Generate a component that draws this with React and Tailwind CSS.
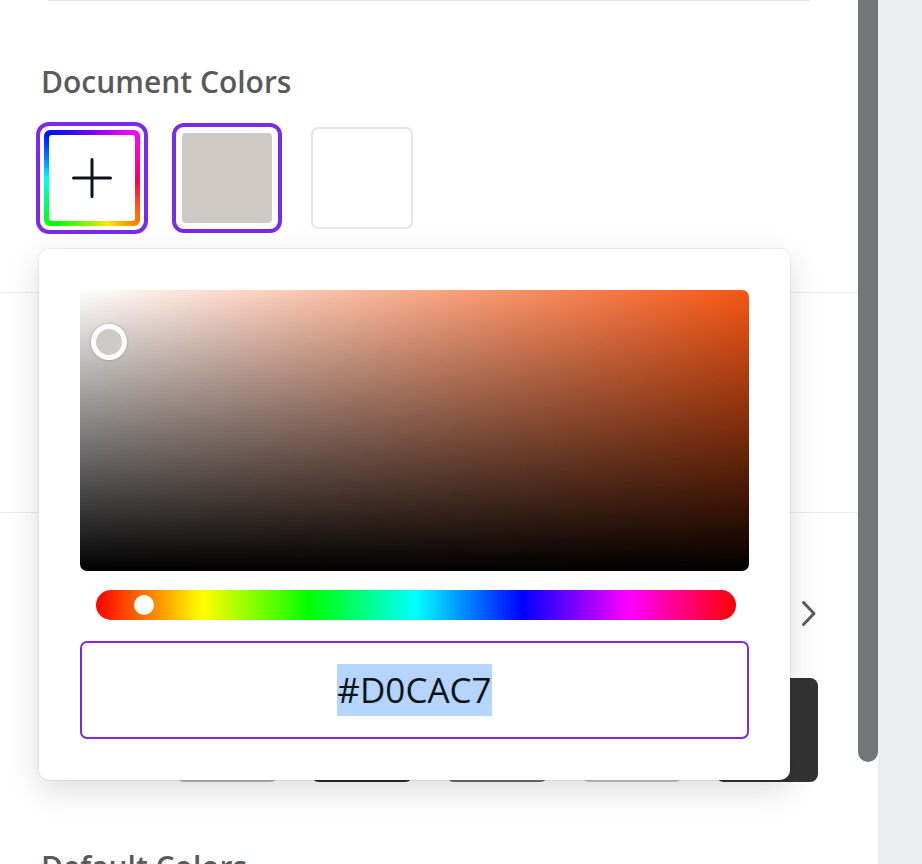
import React from "react";

function PlusIcon() {
  return (
    <svg width="40" height="40" viewBox="0 0 40 40" fill="none">
      <path d="M1.5 20H38.5M20 1.5V38.5" stroke="#0e1318" strokeWidth="3" strokeLinecap="round" />
    </svg>
  );
}

function Chevron() {
  return (
    <svg width="16" height="27" viewBox="0 0 16 27" fill="none">
      <path d="M2.5 2.5L13 13.5L2.5 24.5" stroke="#5b5b5b" strokeWidth="3" strokeLinecap="round" strokeLinejoin="round" />
    </svg>
  );
}

const defaultRow = ["bg-white", "bg-[#b8b8b8]", "bg-[#2b2b2b]", "bg-[#707070]", "bg-[#c8c8c8]", "bg-[#333333]"];

export default function App() {
  return (
    <div className="flex w-[922px] h-[864px] overflow-hidden bg-white font-['Open_Sans',sans-serif]">
      <div className="relative w-[858px] shrink-0 flex flex-col">
        <div className="ml-[48px] w-[762px] h-px bg-[#e4e4e4] shrink-0" />
        <h2 className="mt-[61px] ml-[41px] text-[30px] leading-[40px] font-semibold text-[#5a5a5a] shrink-0">
          Document Colors
        </h2>
        <div className="mt-[25px] ml-[41px] flex gap-[33px] shrink-0">
          <div className="w-[102px] h-[102px] rounded-[8px] bg-white p-[3px] shadow-[0_0_0_1px_#ffffff,0_0_0_5px_#7d2ae8]">
            <div className="w-full h-full rounded-[6px] p-[5px] bg-[conic-gradient(#7a00ff,#ff00ff_45deg,#ff0050_95deg,#ff8000_135deg,#ffe600_160deg,#00ff00_220deg,#00ffff_270deg,#0010ff_315deg,#7a00ff)]">
              <div className="w-full h-full rounded-[3px] bg-white flex items-center justify-center">
                <PlusIcon />
              </div>
            </div>
          </div>
          <div className="w-[102px] h-[102px] rounded-[8px] bg-white p-[6px] shadow-[0_0_0_4px_#7d2ae8]">
            <div className="w-full h-full rounded-[4px] bg-[#d0cac7]" />
          </div>
          <div className="w-[102px] h-[102px] rounded-[7px] bg-white border-2 border-[#e6e6e6]" />
        </div>
        <div className="mt-[63px] h-px bg-[#ebebeb] shrink-0" />
        <div className="h-[219px] shrink-0" />
        <div className="h-px bg-[#ebebeb] shrink-0" />
        <div className="mt-[82px] h-[36px] pr-[41px] flex items-center justify-end shrink-0">
          <Chevron />
        </div>
        <div className="mt-[47px] ml-[41px] flex gap-[33px] shrink-0">
          {defaultRow.map((c, i) => (
            <div key={i} className={`w-[102px] h-[104px] rounded-[8px] ${c}`} />
          ))}
        </div>
        <h2 className="mt-[65px] ml-[41px] text-[30px] leading-[40px] font-semibold text-[#5a5a5a] shrink-0">
          Default Colors
        </h2>

        <div className="absolute left-[39px] top-[249px] w-[751px] rounded-[10px] bg-white p-[41px] shadow-[0_0_0_1px_rgba(0,0,0,0.05),0_10px_32px_rgba(0,0,0,0.14)]">
          <div className="relative h-[281px] rounded-[7px] bg-[linear-gradient(to_top,#000,rgba(0,0,0,0)),linear-gradient(to_right,#fff,#f65614)]">
            <div className="absolute left-[11px] top-[34px] w-[36px] h-[36px] rounded-full border-[5px] border-white bg-[#d0cac7] shadow-[0_0_3px_rgba(0,0,0,0.25)]" />
          </div>
          <div className="relative mt-[19px] ml-[16px] w-[640px] h-[30px] rounded-full bg-[linear-gradient(to_right,#ff0000,#ffff00,#00ff00,#00ffff,#0000ff,#ff00ff,#ff0000)]">
            <div className="absolute left-[38px] top-[5px] w-[20px] h-[20px] rounded-full bg-white" />
          </div>
          <div className="mt-[21px] h-[98px] rounded-[7px] border-2 border-[#7d2ae8] flex items-center justify-center">
            <span className="bg-[#b4d5fe] text-[35px] text-[#0e1318]">#D0CAC7</span>
          </div>
        </div>
      </div>
      <div className="w-[20px] shrink-0 bg-white">
        <div className="h-[762px] rounded-b-[10px] bg-[#727678]" />
      </div>
      <div className="flex-1 bg-[#eceef0]" />
    </div>
  );
}
